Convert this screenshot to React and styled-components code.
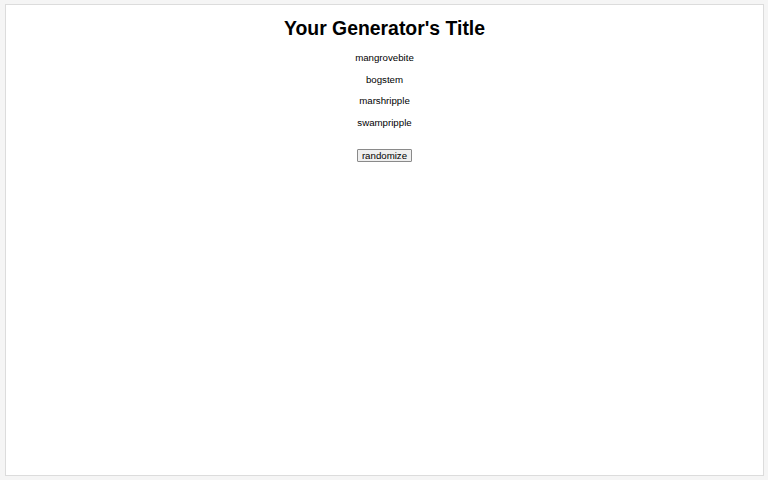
import React, { useState } from 'react';
import styled, { createGlobalStyle } from 'styled-components';

const GlobalStyle = createGlobalStyle`
    html, body {
        margin: 0;
        padding: 0;
        background: #f5f5f5;
        font-family: "Liberation Sans", Arial, sans-serif;
    }
`

const Page = styled.div`
    box-sizing: border-box;
    height: 480px;
    padding: 4px 4px 4px 5px;
`

const Card = styled.div`
    box-sizing: border-box;
    height: 472px;
    background: #fff;
    border: 1px solid #dcdcdc;
    display: flex;
    flex-direction: column;
    align-items: center;
`

const Titulo = styled.h1`
    margin: 12px 0 13px;
    font-size: 19.4px;
    line-height: 22px;
    font-weight: bold;
    color: #000;
`

const Lista = styled.div`
    display: flex;
    flex-direction: column;
    align-items: center;
    gap: 10px;
`

const Item = styled.div`
    font-size: 9.7px;
    line-height: 11.6px;
    color: #000;
`

const Botao = styled.button`
    margin-top: 21px;
    font-family: "Liberation Sans", Arial, sans-serif;
    font-size: 9.7px;
    line-height: 11px;
    padding: 0 4px;
    color: #000;
    background: #efefef;
    border: 1px solid #8a8a8a;
    border-radius: 1px;
`

const nomes = ['mangrovebite', 'bogstem', 'marshripple', 'swampripple']

function App() {
    const [lista, setLista] = useState(nomes)

    const randomize = () => {
        setLista([...lista].sort(() => Math.random() - 0.5))
    }

    return (
        <Page>
            <GlobalStyle />
            <Card>
                <Titulo>Your Generator's Title</Titulo>
                <Lista>
                    { lista.map((nome) => <Item key={ nome }>{ nome }</Item>) }
                </Lista>
                <Botao onClick={ randomize }>randomize</Botao>
            </Card>
        </Page>
    )
}

export default App;
